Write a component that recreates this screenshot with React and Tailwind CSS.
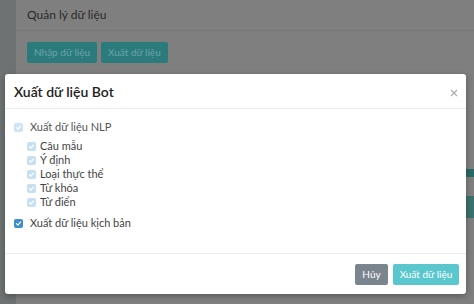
import React from "react";

function Check({ size = 9, color = "#cfe6f3", tick = "#ffffff" }) {
  return (
    <span
      className="inline-flex items-center justify-center rounded-[2px] shrink-0"
      style={{ width: size, height: size, background: color }}
    >
      <svg width={size - 2} height={size - 2} viewBox="0 0 10 10">
        <path d="M2 5.2 L4.2 7.3 L8 2.8" fill="none" stroke={tick} strokeWidth="1.6" strokeLinecap="round" strokeLinejoin="round" />
      </svg>
    </span>
  );
}

export default function App() {
  const subs = ["Câu mẫu", "Ý định", "Loại thực thể", "Từ khóa", "Từ điển"];
  return (
    <div
      className="relative w-[474px] h-[304px] overflow-hidden bg-[#7f7f7f] flex"
      style={{ fontFamily: "Lato, 'Noto Sans', sans-serif" }}
    >
      <div className="w-[16px] h-full bg-[#6e7272]" />
      <div className="flex-1 flex flex-col">
        <div className="h-[31px] border-b border-[#777777] pl-[11px] flex items-center text-[12px] text-[#2a2a2a]">
          Quản lý dữ liệu
        </div>
        <div className="flex gap-[4px] pl-[11px] pt-[11px]">
          <div className="h-[21px] px-[7px] rounded-[2px] bg-[#2c7b7c] text-[#6aa5a6] text-[10px] flex items-center">Nhập dữ liệu</div>
          <div className="h-[21px] px-[7px] rounded-[2px] bg-[#2c7b7c] text-[#6aa5a6] text-[10px] flex items-center">Xuất dữ liệu</div>
        </div>
        <div className="flex-1 flex justify-end">
          <div className="w-[8px] flex flex-col pt-[106px]">
            <div className="h-[8px] bg-[#2a6a66]" />
            <div className="h-[19px]" />
            <div className="h-[22px] bg-[#3a706d]" />
          </div>
        </div>
      </div>

      <div className="absolute left-[5px] top-[74px] w-[461px] h-[220px] bg-white rounded-[3px] shadow-[0_2px_6px_rgba(0,0,0,0.3)] flex flex-col">
        <div className="h-[35px] border-b border-[#ececec] flex items-center justify-between pl-[9px] pr-[8px]">
          <span className="text-[14px] font-semibold text-[#222222] pt-[1px]">Xuất dữ liệu Bot</span>
          <svg width="8" height="8" viewBox="0 0 8 8" className="mt-[4px]">
            <path d="M1 1 L7 7 M7 1 L1 7" stroke="#a9a9a9" strokeWidth="1.1" />
          </svg>
        </div>
        <div className="flex-1 flex flex-col pl-[9px] pt-[14px] text-[11px] text-[#333333]">
          <div className="flex items-center gap-[7px] h-[9px]">
            <Check size={9} color="#cfe4f2" />
            <span className="text-[#555555]">Xuất dữ liệu NLP</span>
          </div>
          <div className="flex flex-col pl-[13px] pt-[7px]">
            {subs.map((s) => (
              <div key={s} className="flex items-center gap-[4px] h-[14px]">
                <Check size={9} color="#c6e0f1" />
                <span className="text-[#444444]">{s}</span>
              </div>
            ))}
          </div>
          <div className="flex items-center gap-[7px] h-[9px] mt-[10px]">
            <Check size={9} color="#3d8fc6" />
            <span className="text-[#444444]">Xuất dữ liệu kịch bản</span>
          </div>
        </div>
        <div className="h-[41px] border-t border-[#ececec] flex items-center justify-end gap-[5px] pr-[7px]">
          <div className="h-[21px] w-[33px] rounded-[2px] bg-[#7b858e] text-white text-[10px] flex items-center justify-center">Hủy</div>
          <div className="h-[21px] w-[66px] rounded-[2px] bg-[#5ac7cf] text-white text-[10px] flex items-center justify-center">Xuất dữ liệu</div>
        </div>
      </div>
    </div>
  );
}
